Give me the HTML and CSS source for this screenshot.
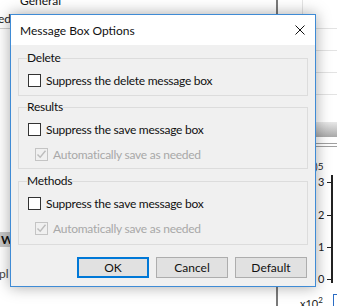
FILE: index.html
```html
<!DOCTYPE html>
<html lang="en">
<head>
    <meta charset="UTF-8">
    <title>Message Box Options</title>
    <link rel="stylesheet" href="styles.css">
</head>
<body>
<div class="screen">
    <!-- the application behind the dialog, mostly hidden -->
    <div class="back-title">General</div>
    <div class="back-ed">ed</div>
    <div class="back-line"></div>
    <div class="back-wi">Wi</div>
    <div class="back-pl">pl</div>
    <div class="back-split top"></div>
    <div class="back-split bottom"></div>
    <div class="back-faint"></div>

    <div class="side">
        <div class="grid-row"></div>
        <div class="grid-row"></div>
        <div class="grid-row"></div>
        <div class="grid-row"></div>
        <div class="toolbar"></div>
        <div class="rule"></div>
        <div class="chart">
            <div class="axis-top">)5</div>
            <div class="axis">
                <div class="tick">3</div>
                <div class="tick">2</div>
                <div class="tick">1</div>
                <div class="tick">0</div>
            </div>
        </div>
    </div>
    <div class="back-x">x10<sup>2</sup></div>
    <div class="back-box"></div>

    <div class="dialog">
        <div class="titlebar">
            <span class="title">Message Box Options</span>
            <svg class="close" width="10" height="10" viewBox="0 0 10 10">
                <path d="M0.5 0.5 L9.5 9.5 M9.5 0.5 L0.5 9.5" stroke="#111" stroke-width="1"/>
            </svg>
        </div>
        <div class="content">
            <fieldset class="group g-delete">
                <legend>Delete</legend>
                <label class="row"><span class="box"></span>Suppress the delete message box</label>
            </fieldset>
            <fieldset class="group g-results">
                <legend>Results</legend>
                <label class="row"><span class="box"></span>Suppress the save message box</label>
                <label class="row sub disabled"><span class="box">
                    <svg width="11" height="11" viewBox="0 0 11 11"><path d="M1.5 5.5 L4.2 8.3 L9.5 1.8" fill="none" stroke="#bcbcbc" stroke-width="1.4"/></svg>
                </span>Automatically save as needed</label>
            </fieldset>
            <fieldset class="group g-methods">
                <legend>Methods</legend>
                <label class="row"><span class="box"></span>Suppress the save message box</label>
                <label class="row sub disabled"><span class="box">
                    <svg width="11" height="11" viewBox="0 0 11 11"><path d="M1.5 5.5 L4.2 8.3 L9.5 1.8" fill="none" stroke="#bcbcbc" stroke-width="1.4"/></svg>
                </span>Automatically save as needed</label>
            </fieldset>
            <div class="buttons">
                <button class="btn default-btn">OK</button>
                <button class="btn">Cancel</button>
                <button class="btn">Default</button>
            </div>
        </div>
    </div>
</div>
</body>
</html>
```

FILE: styles.css
```css
body {
    margin: 0;
    background: #fff;
    font-family: Lato, "Liberation Sans", sans-serif;
    font-size: 12px;
    color: #111;
}
.screen {
    position: relative;
    width: 337px;
    height: 306px;
    overflow: hidden;
    background: #fff;
}

/* background app fragments */
.back-title {
    position: absolute;
    left: 20px;
    top: -7px;
    color: #111;
}
.back-ed {
    position: absolute;
    left: -2px;
    top: 11px;
    color: #222;
}
.back-line {
    position: absolute;
    left: 0;
    top: 28px;
    width: 12px;
    height: 1px;
    background: #cfcfcf;
}
.back-wi {
    position: absolute;
    left: 0;
    top: 232px;
    width: 12px;
    height: 15px;
    background: #c8c8c8;
    font-weight: bold;
    line-height: 15px;
    color: #111;
    padding-left: 1px;
}
.back-pl {
    position: absolute;
    left: -1px;
    top: 266px;
    color: #444;
}
.back-split {
    position: absolute;
    left: 276px;
    width: 2px;
    background: #7a7a7a;
}
.back-split.top { top: 0; height: 16px; }
.back-split.bottom { top: 286px; height: 20px; }
.back-faint {
    position: absolute;
    left: 302px;
    top: 0;
    width: 1px;
    height: 16px;
    background: #e4e4e4;
}

.side {
    position: absolute;
    left: 310px;
    top: 0;
    width: 27px;
    height: 292px;
    display: flex;
    flex-direction: column;
}
.grid-row {
    height: 21px;
    border-bottom: 1px solid #e3e3e3;
    flex: none;
}
.grid-row:first-child { height: 28px; }
.toolbar {
    margin-top: 27px;
    height: 15px;
    background: linear-gradient(#e8e8e8, #a9a9a9);
    flex: none;
}
.rule {
    margin-top: 6px;
    height: 2px;
    border-top: 1px solid #a0a0a0;
    border-bottom: 1px solid #a0a0a0;
    flex: none;
}
.chart {
    flex: 1;
    padding-left: 8px;
    font-size: 11px;
    color: #222;
}
.axis-top {
    margin-left: -3px;
    margin-top: 14px;
    font-size: 10px;
    line-height: 10px;
}
.axis {
    margin-top: 4px;
    margin-right: 4px;
    border-right: 2px solid #222;
    height: 108px;
}
.tick {
    height: 32px;
    line-height: 14px;
    position: relative;
}
.tick:first-child { height: 33px; }
.tick::after {
    content: "";
    position: absolute;
    right: 0;
    top: 7px;
    width: 4px;
    height: 1px;
    background: #222;
}
.back-x {
    position: absolute;
    left: 300px;
    top: 295px;
    font-size: 11px;
    color: #222;
}
.back-x sup { font-size: 8px; }
.back-box {
    position: absolute;
    left: 333px;
    top: 294px;
    width: 10px;
    height: 20px;
    border: 1px solid #2b6cc4;
}

/* dialog */
.dialog {
    position: absolute;
    left: 10px;
    top: 14px;
    width: 304px;
    height: 271px;
    border: 1px solid #3f8bd5;
    background: #f0f0f0;
    box-shadow: 0 0 14px rgba(0, 0, 0, 0.35);
    display: flex;
    flex-direction: column;
    letter-spacing: -0.25px;
}
.titlebar {
    height: 30px;
    background: #fff;
    display: flex;
    align-items: center;
    padding-left: 9px;
    padding-right: 10px;
    flex: none;
}
.title {
    flex: 1;
    font-size: 12px;
    letter-spacing: 0;
    padding-top: 1px;
}
.close { display: block; }

.content {
    padding: 6px 7px 0 7px;
    display: flex;
    flex-direction: column;
}
.group {
    box-sizing: border-box;
    margin: 0;
    padding: 0 0 0 9px;
    border: 1px solid #dcdcdc;
    display: flex;
    flex-direction: column;
    min-width: 0;
}
.group legend {
    padding: 0;
    margin-left: -1px;
    line-height: 14px;
}
.g-delete { height: 45px; }
.g-results { height: 69px; margin-top: 4px; }
.g-methods { height: 71px; margin-top: 5px; }

.row {
    display: flex;
    align-items: center;
    height: 13px;
    margin-top: 9px;
    white-space: nowrap;
}
.row.sub {
    margin-top: 12px;
    padding-left: 7px;
}
.box {
    width: 11px;
    height: 11px;
    border: 1px solid #333;
    background: #fff;
    margin-right: 5px;
    flex: none;
    display: flex;
}
.disabled { color: #a8a8a8; }
.disabled .box {
    border-color: #c4c4c4;
    background: #f0f0f0;
}

.buttons {
    display: flex;
    justify-content: flex-end;
    gap: 7px;
    margin-top: 12px;
    padding-right: 1px;
}
.btn {
    width: 72px;
    height: 21px;
    box-sizing: border-box;
    border: 1px solid #adadad;
    background: #e1e1e1;
    font-family: Lato, "Liberation Sans", sans-serif;
    font-size: 12px;
    letter-spacing: 0;
    color: #111;
    padding: 0;
}
.default-btn {
    border: 2px solid #0078d7;
}
```
